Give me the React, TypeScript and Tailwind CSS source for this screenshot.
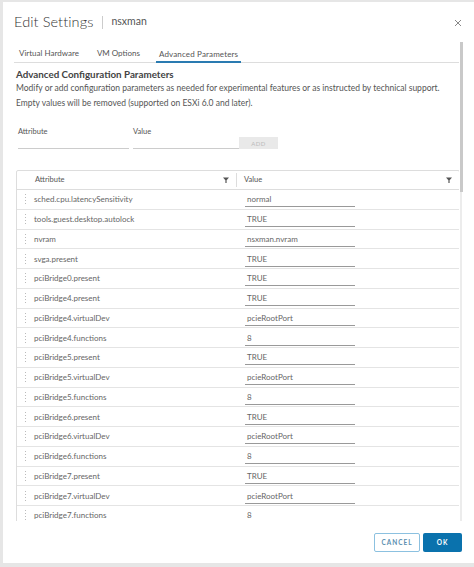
import React from "react";

const rows: [string, string][] = [
  ["sched.cpu.latencySensitivity", "normal"],
  ["tools.guest.desktop.autolock", "TRUE"],
  ["nvram", "nsxman.nvram"],
  ["svga.present", "TRUE"],
  ["pciBridge0.present", "TRUE"],
  ["pciBridge4.present", "TRUE"],
  ["pciBridge4.virtualDev", "pcieRootPort"],
  ["pciBridge4.functions", "8"],
  ["pciBridge5.present", "TRUE"],
  ["pciBridge5.virtualDev", "pcieRootPort"],
  ["pciBridge5.functions", "8"],
  ["pciBridge6.present", "TRUE"],
  ["pciBridge6.virtualDev", "pcieRootPort"],
  ["pciBridge6.functions", "8"],
  ["pciBridge7.present", "TRUE"],
  ["pciBridge7.virtualDev", "pcieRootPort"],
  ["pciBridge7.functions", "8"],
];

function Funnel() {
  return (
    <svg width="6" height="6" viewBox="0 0 6 6">
      <path d="M0 0.5h6L3.6 3.3V6H2.4V3.3Z" fill="#555" />
    </svg>
  );
}

function Dots() {
  return (
    <div className="flex flex-col gap-[2px] w-[2px]">
      <div className="w-[1px] h-[1px] bg-[#bbb]" />
      <div className="w-[1px] h-[1px] bg-[#bbb]" />
      <div className="w-[1px] h-[1px] bg-[#bbb]" />
      <div className="w-[1px] h-[1px] bg-[#bbb]" />
    </div>
  );
}

export default function App() {
  return (
    <div
      className="w-[474px] h-[567px] bg-[#e6e6e6] overflow-hidden pl-[3px] pt-[2px]"
      style={{ fontFamily: "Lato, 'Open Sans', sans-serif" }}
    >
      <div className="w-[471px] h-[561px] bg-white flex flex-col">
        {/* Header */}
        <div className="h-[40px] flex items-center pl-[11px] pr-[12px] shrink-0">
          <span className="text-[14.5px] font-light text-[#333] tracking-[0.1px]">Edit Settings</span>
          <span className="ml-[9px] w-[1px] h-[13px] bg-[#ccc]" />
          <span className="ml-[8px] text-[10.5px] text-[#555]">nsxman</span>
          <svg className="ml-auto mt-[2px]" width="8" height="8" viewBox="0 0 8 8">
            <path d="M1 1L7 7M7 1L1 7" stroke="#888" strokeWidth="1" />
          </svg>
        </div>

        {/* Body */}
        <div className="h-[479px] flex shrink-0 pt-[2px]">
          <div className="w-[456px] pl-[11px] overflow-hidden">
            {/* Tabs */}
            <div className="h-[19px] flex border-b border-[#ddd] text-[8px] text-[#555] w-[446px]">
              <div className="pl-[5px] pr-[16px] flex items-center">Virtual Hardware</div>
              <div className="px-[2px] flex items-center">VM Options</div>
              <div className="ml-[14px] px-[3px] flex items-center border-b-[2px] border-[#2a7bb1] mb-[-1px] pt-[2px] tracking-[0.15px]">
                Advanced Parameters
              </div>
            </div>
            <div className="pl-[2px] pt-[4px]">
              <div className="text-[9.8px] font-bold text-[#444] leading-[14px]">
                Advanced Configuration Parameters
              </div>
              <div className="text-[8.5px] text-[#555] leading-[15px] mt-[0px]">
                Modify or add configuration parameters as needed for experimental features or as instructed by technical support.
                <br />
                Empty values will be removed (supported on ESXi 6.0 and later).
              </div>
              {/* Add form */}
              <div className="flex mt-[15px] text-[7.5px] text-[#555]">
                <div className="ml-[2px] w-[115px]">
                  <div className="h-[10px]">Attribute</div>
                  <div className="mt-[12px] h-[1px] bg-[#ccc] w-[111px]" />
                </div>
                <div className="w-[106px]">
                  <div className="h-[10px]">Value</div>
                  <div className="mt-[12px] h-[1px] bg-[#ccc] w-[106px]" />
                </div>
                <div className="mt-[11px] w-[39px] h-[12px] bg-[#e9e9e9] flex items-center justify-center text-[6px] text-[#bbb] tracking-[0.5px]">
                  ADD
                </div>
              </div>
              {/* Table */}
              <div className="mt-[21px] w-[444px] border border-[#ddd] rounded-t-[2px]">
                <div className="h-[19px] flex items-center border-b border-[#ddd] text-[7.5px] text-[#555]">
                  <div className="w-[219px] flex items-center pl-[18px] pr-[7px]">
                    <span>Attribute</span>
                    <span className="ml-auto"><Funnel /></span>
                  </div>
                  <div className="w-[1px] h-[14px] bg-[#ddd]" />
                  <div className="flex-1 flex items-center pl-[7px] pr-[7px]">
                    <span>Value</span>
                    <span className="ml-auto"><Funnel /></span>
                  </div>
                </div>
                {rows.map(([a, v], i) => (
                  <div
                    key={i}
                    className="h-[19.75px] flex items-center border-b border-[#e4e4e4] text-[8px] text-[#666]"
                  >
                    <div className="w-[220px] flex items-center pl-[8px]">
                      <Dots />
                      <span className="ml-[7px]">{a}</span>
                    </div>
                    <div className="flex-1 pl-[8px]">
                      <div className="w-[110px] border-b border-[#999] pl-[2px] leading-[14px] h-[15px] mt-[1px]">{v}</div>
                    </div>
                  </div>
                ))}
              </div>
            </div>
          </div>
          {/* Scrollbar */}
          <div className="w-[3px] ml-[1px] flex flex-col -mt-[2px]">
            <div className="h-[150px] bg-[#c9c9c9]" />
            <div className="flex-1 bg-[#ececec] w-[2px]" />
          </div>
        </div>

        {/* Footer */}
        <div className="flex-1 flex items-center justify-end pr-[12px] gap-[3px] pt-[1px]">
          <button className="w-[46px] h-[19px] border border-[#8cc1e0] rounded-[2px] text-[6.5px] font-bold text-[#5b8fb0] tracking-[1px]">
            CANCEL
          </button>
          <button className="w-[39px] h-[19px] bg-[#0a72ad] rounded-[2px] text-[6.5px] font-bold text-white tracking-[1px]">
            OK
          </button>
        </div>
      </div>
    </div>
  );
}
